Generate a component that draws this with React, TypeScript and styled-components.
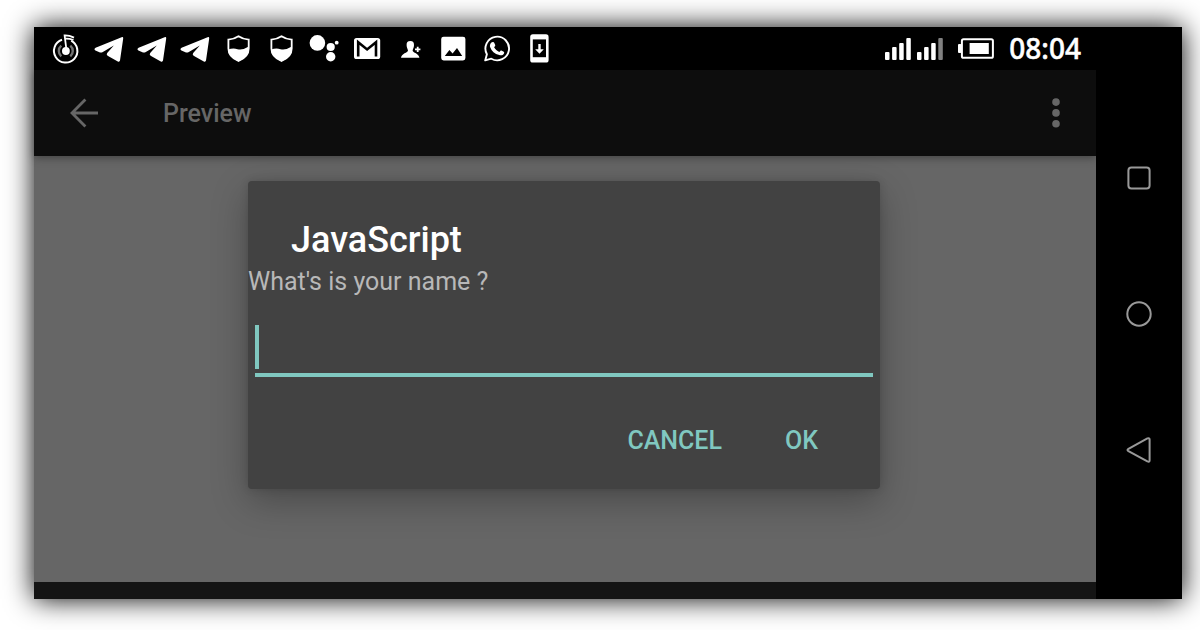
import React from "react";
import styled, { createGlobalStyle } from "styled-components";

const GlobalStyle = createGlobalStyle`
  *, *::before, *::after { box-sizing: border-box; }
  body { margin: 0; background: #fff; font-family: Roboto, sans-serif; }
  button { border: 0; background: none; padding: 0; font: inherit; cursor: pointer; }
`;

const teal = "#80c8c0";

const Page = styled.div`
  display: flex;
  min-height: 100vh;
  padding: 27px 18px 31px 34px;
`;

const Device = styled.div`
  flex: 1;
  min-width: 0;
  display: flex;
  background: #000;
  box-shadow: 0 0 26px #000;
`;

const Screen = styled.div`
  flex: 1;
  min-width: 0;
  display: flex;
  flex-direction: column;
`;

const StatusBar = styled.div`
  display: flex;
  align-items: center;
  justify-content: space-between;
  height: 43px;
  padding: 0 15px 0 10px;
  background: #000;
  color: #fff;
`;

const StatusGroup = styled.div<{ $gap?: number }>`
  display: flex;
  align-items: center;
  gap: ${(p) => p.$gap ?? 0}px;
`;

const StatusIcon = styled.svg`
  display: block;
  width: 43px;
  height: 43px;
  fill: #fff;
`;

const Clock = styled.time`
  font: 500 28px/43px "Noto Sans", sans-serif;
  -webkit-text-stroke: 0.5px #fff;
`;

const AppBar = styled.header`
  position: relative;
  display: flex;
  align-items: center;
  height: 86px;
  padding: 0 16px 0 26px;
  background: #0d0d0d;
  color: #666;
  box-shadow: 0 2px 8px rgba(0, 0, 0, 0.35);
`;

const IconButton = styled.button`
  display: grid;
  place-items: center;
  width: 48px;
  height: 48px;
  color: inherit;
`;

const AppTitle = styled.h1`
  flex: 1;
  margin: 0 0 0 55px;
  padding-top: 2px;
  font-size: 25px;
  line-height: 30px;
  font-weight: 500;
`;

const Content = styled.main`
  flex: 1;
  padding: 25px 16px 93px 14px;
  background: #666;
`;

const Dialog = styled.form`
  max-width: 632px;
  margin: 0 auto;
  padding: 38px 0 24px;
  border-radius: 4px;
  background: #424242;
  box-shadow: 0 12px 36px rgba(0, 0, 0, 0.28), 0 0 8px rgba(0, 0, 0, 0.14);
`;

const DialogTitle = styled.h2`
  margin: 0 43px;
  color: #fff;
  font-size: 36px;
  line-height: 42px;
  font-weight: 500;
`;

const Message = styled.label`
  display: block;
  margin-top: 6px;
  color: #b8b8b8;
  font-size: 25px;
  line-height: 30px;
`;

const Field = styled.div`
  display: flex;
  margin: 28px 7px 0;
  padding-bottom: 4px;
  border-bottom: 4px solid ${teal};
`;

const Caret = styled.span`
  width: 4px;
  height: 44px;
  background: ${teal};
`;

const TextInput = styled.input`
  flex: 1;
  min-width: 0;
  height: 44px;
  padding: 0;
  border: 0;
  outline: 0;
  background: none;
  color: #fff;
  font: 25px/30px Roboto, sans-serif;
  caret-color: transparent;
`;

const Actions = styled.div`
  display: flex;
  justify-content: flex-end;
  gap: 23px;
  margin-top: 40px;
  padding-right: 42px;
`;

const ActionButton = styled.button`
  height: 48px;
  padding: 0 20px;
  color: ${teal};
  font-size: 25px;
  line-height: 30px;
  font-weight: 500;
`;

const BottomStrip = styled.div`
  height: 17px;
  background: #141414;
`;

const NavRail = styled.nav`
  display: flex;
  flex-direction: column;
  align-items: center;
  justify-content: center;
  gap: 88px;
  width: 86px;
  padding-top: 2px;
  color: #999;
`;

const Music = () => (
  <StatusIcon viewBox="0 0 43 43" aria-hidden="true">
    <g fill="none" stroke="#fff">
      <path d="M18 12.8A11.7 11.7 0 1 0 27.2 13.6" strokeWidth="2" />
      <path d="M17.3 18.7a6.9 6.9 0 0 0 0 10.6M26.3 18.7a6.9 6.9 0 0 1 0 10.6" strokeWidth="2.4" opacity=".45" />
      <path d="M22.6 24L20.6 8.4Q25 8.2 30 10.6M21.2 11.6Q25 11.4 29.5 13" strokeWidth="1.8" />
    </g>
    <circle cx="21.9" cy="24" r="3.9" />
  </StatusIcon>
);

const Telegram = () => (
  <StatusIcon viewBox="0 0 43 43" aria-hidden="true">
    <path d="M8.6 20.8L34.6 10.2Q36.4 9.6 36.2 11.5L33 33.6Q32.5 35.4 30.8 34.4L20.6 28.8Q19 27.6 20.2 26L26.8 18.6L15.4 25.2Q14.2 25.8 13 25.4L8.4 23.6Q6.4 22.2 8.6 20.8Z" />
  </StatusIcon>
);

const Shield = () => (
  <StatusIcon viewBox="0 0 43 43" aria-hidden="true">
    <path
      d="M22.5 9.3Q18 12.4 12.4 12.6V21.5C12.4 27.5 16.4 31.5 22.5 34C28.6 31.5 32.7 27.5 32.7 21.5V12.6Q27 12.4 22.5 9.3Z"
      fill="none"
      stroke="#fff"
      strokeWidth="1.8"
    />
    <path d="M12.2 22.6Q17 20.8 21.5 22.2Q27 23.4 32.8 19.6V22C32.5 28 28.6 31.8 22.5 34.4C16.4 31.8 12.5 28 12.2 22.6Z" />
  </StatusIcon>
);

const Assistant = () => (
  <StatusIcon viewBox="0 0 43 43" aria-hidden="true">
    <circle cx="15.4" cy="15.9" r="7.8" />
    <circle cx="28.7" cy="20" r="4.1" />
    <circle cx="28.7" cy="29.8" r="4.7" />
    <circle cx="34.7" cy="15.7" r="1.9" />
  </StatusIcon>
);

const Gmail = () => (
  <StatusIcon viewBox="0 0 43 43" aria-hidden="true">
    <rect x="9" y="11" width="26.2" height="21" rx="2.6" />
    <path d="M13.2 29.4V15.2L22.1 22.4L31 15.2V29.4" fill="none" stroke="#000" strokeWidth="2.6" />
  </StatusIcon>
);

const PersonAdd = () => (
  <StatusIcon viewBox="0 0 43 43" aria-hidden="true">
    <path d="M22.3 14C25 14 26.2 15.6 26 18.2C25.9 20.6 24.8 22 24.6 23.4C24.6 25.6 31.2 26.4 31.4 30.8H13C13.2 26.4 20 25.6 20 23.4C19.8 22 18.7 20.6 18.6 18.2C18.4 15.6 19.6 14 22.3 14Z" />
    <path d="M29.7 19.7V25M27 22.3H32.4" stroke="#fff" strokeWidth="1.8" />
  </StatusIcon>
);

const Picture = () => (
  <StatusIcon viewBox="0 0 43 43" aria-hidden="true">
    <rect x="10.2" y="9.7" width="24.2" height="23.8" rx="2.4" />
    <path d="M13.8 28.9L18.4 23L21.6 26.6L26 21L31.2 28.9Z" fill="#000" />
  </StatusIcon>
);

const WhatsApp = () => (
  <StatusIcon viewBox="0 0 43 43" aria-hidden="true">
    <path
      d="M11.2 33.4L12.9 27.2A11.8 11.8 0 1 1 17.3 31.7Z"
      fill="none"
      stroke="#fff"
      strokeWidth="1.9"
      strokeLinejoin="round"
    />
    <path d="M18.8 14.9C19.5 14.8 19.9 15 20.2 15.7L21.2 18C21.4 18.6 21.1 19.1 20.1 20.3C21.4 22.6 22.9 23.9 25.3 25C26.4 23.6 26.8 23.2 27.4 23.5L29.7 24.7C30.3 25 30.3 25.5 30 26.4C29.3 28 27.2 28.7 25.3 28.1C20.6 26.9 17.6 23.9 16.2 20.2C15.4 17.8 16.7 15.2 18.8 14.9Z" />
  </StatusIcon>
);

const SystemUpdate = () => (
  <StatusIcon viewBox="0 0 43 43" aria-hidden="true">
    <rect x="13.2" y="7.3" width="18.4" height="28.2" rx="2.6" />
    <path d="M15.8 12.4H29V30.2H15.8Z" fill="#000" />
    <path d="M21.3 17H23.7V22.2H26.8L22.5 26.7L18.2 22.2H21.3Z" />
  </StatusIcon>
);

const signalHeights = [8, 13, 17, 22];

const Signal = ({ weak = false }: { weak?: boolean }) => (
  <svg width="26" height="22" viewBox="0 0 26 22" aria-hidden="true">
    {signalHeights.map((h, i) => (
      <rect key={h} x={i * 7.1} y={22 - h} width="4.5" height={h} rx="1" fill={weak && i === 3 ? "#808080" : "#fff"} />
    ))}
  </svg>
);

const Battery = () => (
  <svg width="36" height="21" viewBox="0 0 36 21" aria-hidden="true">
    <rect x="3.9" y="1.2" width="31" height="18.6" rx="1.6" fill="none" stroke="#fff" strokeWidth="2" />
    <rect x="0" y="6" width="3.4" height="9" rx="1" fill="#fff" />
    <rect x="11.6" y="5" width="19.2" height="11" fill="#fff" />
  </svg>
);

export default function App() {
  return (
    <>
      <GlobalStyle />
      <Page>
        <Device>
          <Screen>
            <StatusBar>
              <StatusGroup>
                <Music />
                <Telegram />
                <Telegram />
                <Telegram />
                <Shield />
                <Shield />
                <Assistant />
                <Gmail />
                <PersonAdd />
                <Picture />
                <WhatsApp />
                <SystemUpdate />
              </StatusGroup>
              <StatusGroup $gap={15}>
                <StatusGroup $gap={6}>
                  <Signal />
                  <Signal weak />
                </StatusGroup>
                <Battery />
                <Clock>08:04</Clock>
              </StatusGroup>
            </StatusBar>
            <AppBar>
              <IconButton type="button" aria-label="Back">
                <svg width="30" height="30" viewBox="0 0 30 30" fill="none" stroke="currentColor" strokeWidth="2.8" aria-hidden="true">
                  <path d="M29 15H3M16.4 1.6L3 15L16.4 28.4" />
                </svg>
              </IconButton>
              <AppTitle>Preview</AppTitle>
              <IconButton type="button" aria-label="More options">
                <svg width="10" height="30" viewBox="0 0 10 30" fill="currentColor" aria-hidden="true">
                  <circle cx="5" cy="4.1" r="3.8" />
                  <circle cx="5" cy="14.9" r="3.8" />
                  <circle cx="5" cy="25.7" r="3.8" />
                </svg>
              </IconButton>
            </AppBar>
            <Content>
              <Dialog role="dialog" aria-labelledby="dialog-title" onSubmit={(e) => e.preventDefault()}>
                <DialogTitle id="dialog-title">JavaScript</DialogTitle>
                <Message htmlFor="answer">What's is your name ?</Message>
                <Field>
                  <Caret />
                  <TextInput id="answer" type="text" autoComplete="off" />
                </Field>
                <Actions>
                  <ActionButton type="button">CANCEL</ActionButton>
                  <ActionButton type="submit">OK</ActionButton>
                </Actions>
              </Dialog>
            </Content>
            <BottomStrip />
          </Screen>
          <NavRail aria-label="System navigation">
            <IconButton type="button" aria-label="Recent apps">
              <svg width="26" height="26" viewBox="0 0 26 26" fill="none" stroke="currentColor" strokeWidth="2" aria-hidden="true">
                <rect x="2.4" y="2.4" width="21.2" height="21.2" rx="3" />
              </svg>
            </IconButton>
            <IconButton type="button" aria-label="Home">
              <svg width="26" height="26" viewBox="0 0 26 26" fill="none" stroke="currentColor" strokeWidth="2" aria-hidden="true">
                <circle cx="13" cy="13" r="11.7" />
              </svg>
            </IconButton>
            <IconButton type="button" aria-label="Back to previous app">
              <svg width="26" height="26" viewBox="0 0 26 26" fill="none" stroke="currentColor" strokeWidth="2" strokeLinejoin="round" aria-hidden="true">
                <path d="M2 12.2L21.4 1.4Q23.6 0.8 23.6 2.6V23.4Q23.6 25.2 21.4 24.4L2 13.8Q1 13 2 12.2Z" />
              </svg>
            </IconButton>
          </NavRail>
        </Device>
      </Page>
    </>
  );
}
